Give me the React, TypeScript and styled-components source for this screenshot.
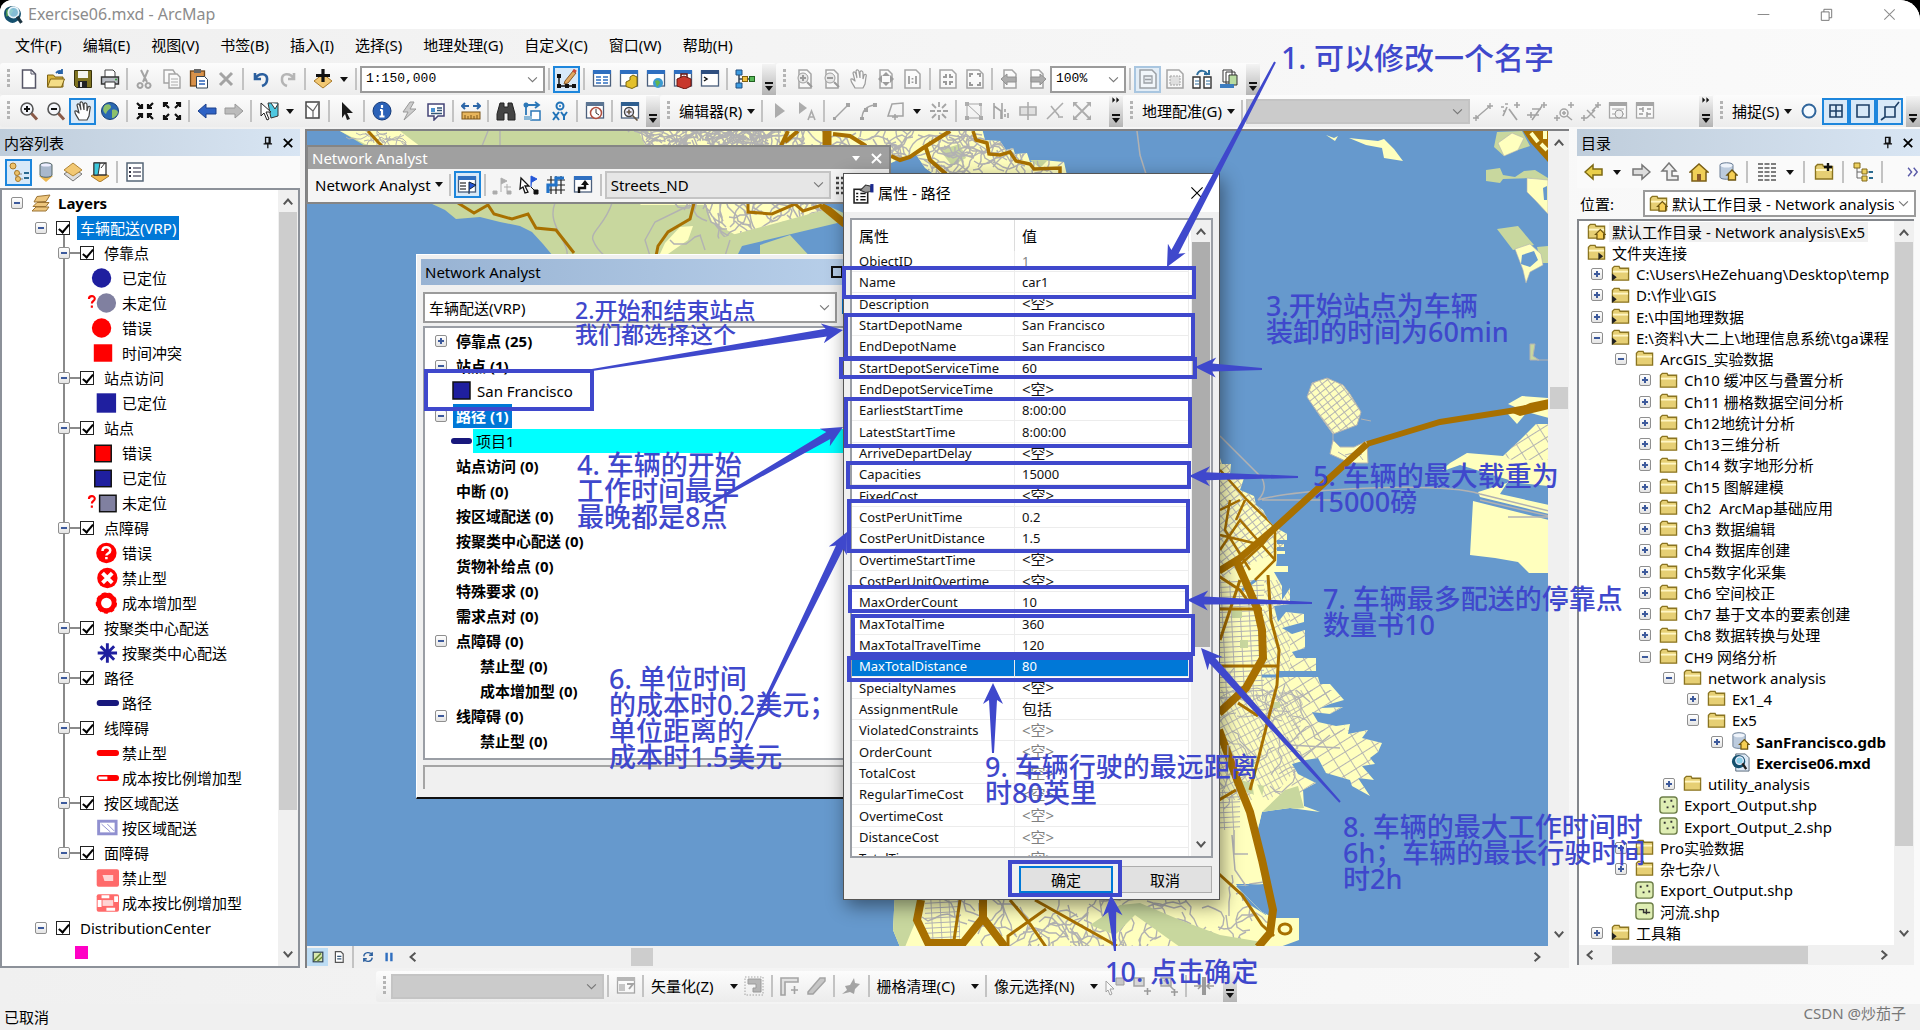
import React from "react";
import styled, { createGlobalStyle, css } from "styled-components";

const INK = "#3f48cc";
const SANS = `"Noto Sans", "Noto Sans CJK SC", sans-serif`;

const Global = createGlobalStyle`
  html, body, #root { height: 100%; }
  body { margin: 0; background: #000; overflow: hidden; }
  * { box-sizing: border-box; }
  button, input, select { font: inherit; color: inherit; margin: 0; padding: 0; }
  ul { list-style: none; margin: 0; padding: 0; }
`;

/* ---------- window frame ---------- */

const Root = styled.div`
  position: relative;
  display: flex;
  flex-direction: column;
  height: 100vh;
  overflow: hidden;
  border-radius: 12px 20px 0 0;
  background: linear-gradient(90deg, #f0f0f0, #fafafa);
  color: #000;
  font: 15px/20px ${SANS};
  white-space: nowrap;
`;
const TitleBar = styled.header`
  display: flex;
  align-items: center;
  gap: 5px;
  height: 29px;
  padding: 0 2px 1px;
  background: #fff;
  color: #8c8c8c;
  font-size: 16px;
`;
const TitleText = styled.span`flex: 1;`;
const WinButton = styled.button`
  display: flex;
  align-items: center;
  justify-content: center;
  width: 58px;
  height: 28px;
  border: 0;
  background: none;
`;
const MenuBar = styled.nav`
  display: flex;
  align-items: center;
  height: 34px;
  padding: 0 0 2px 5px;
`;
const MenuItem = styled.button`
  padding: 0 11px 0 10px;
  border: 0;
  background: none;
`;
const ToolRow = styled.div<{ $last?: boolean }>`
  display: flex;
  height: 32px;
  margin-bottom: ${p => (p.$last ? 2 : 0)}px;
`;
const ToolBar = styled.div<{ $w: number }>`
  display: flex;
  align-items: center;
  flex: 0 0 ${p => p.$w}px;
  padding-left: 4px;
  border-radius: 3px;
  background: linear-gradient(#fcfcfc, #ececec);
`;
const Grip = styled.span`
  flex: none;
  width: 3px;
  height: 20px;
  margin: 0 5px 0 3px;
  background: repeating-linear-gradient(#b4b4b4 0 3px, transparent 3px 5px);
`;
const Sep = styled.span`
  flex: none;
  width: 2px;
  height: 22px;
  margin: 0 3px;
  background: #c3c3c3;
`;
const Tool = styled.button<{ $on?: boolean; $pale?: boolean }>`
  display: flex;
  align-items: center;
  justify-content: center;
  flex: none;
  width: 27px;
  height: 27px;
  border: ${p => (p.$on ? "2px solid #1d86dc" : p.$pale ? "2px solid #a9c6e0" : "0")};
  background: ${p => (p.$on ? "#d8e9f8" : p.$pale ? "#e3edf6" : "none")};
`;
const Faint = styled.span`display: flex; filter: grayscale(1); opacity: 0.5;`;
const TextTool = styled.button<{ $gap?: number }>`
  display: flex;
  align-items: center;
  gap: ${p => p.$gap ?? 5}px;
  padding: 0 3px 0 4px;
  border: 0;
  background: none;
`;
const CaretShape = styled.span<{ $c?: string }>`
  flex: none;
  border: 4px solid transparent;
  border-top: 5px solid ${p => p.$c ?? "#111"};
  border-bottom: 0;
`;
const CaretBtn = styled.button`
  display: flex;
  align-items: center;
  justify-content: center;
  width: 16px;
  height: 26px;
  border: 0;
  background: none;
`;
const Overflow = styled.button`
  display: flex;
  flex-direction: column;
  align-items: center;
  justify-content: flex-end;
  gap: 2px;
  width: 14px;
  height: 31px;
  margin-left: auto;
  padding-bottom: 4px;
  border: 0;
  background: linear-gradient(#f4f4f4, #b4b4b4);
`;
const Dash = styled.span`width: 8px; height: 2px; background: #111;`;
const ComboBox = styled.span<{ $w?: number; $off?: boolean; $soft?: boolean; $h?: number }>`
  display: flex;
  align-items: center;
  gap: 4px;
  flex: ${p => (p.$w ? `0 0 ${p.$w}px` : "1")};
  min-width: 0;
  height: ${p => p.$h ?? 25}px;
  padding: 0 5px 0 4px;
  border: 2px solid ${p => (p.$off || p.$soft ? "#c4c4c4" : "#9b9b9b")};
  background: ${p => (p.$off ? "#cbcbcb" : p.$soft ? "#e6e6e6" : "#fff")};
`;
const Select = styled.select<{ $mono?: boolean }>`
  flex: 1;
  min-width: 0;
  border: 0;
  background: none;
  appearance: none;
  outline: 0;
  text-overflow: clip;
  ${p => p.$mono && css`font: 13px/18px "Liberation Mono", monospace;`}
`;

/* ---------- side panels ---------- */

const Main = styled.main`display: flex; flex: 1; min-height: 0;`;
const Side = styled.aside<{ $w: number }>`
  display: flex;
  flex-direction: column;
  flex: 0 0 ${p => p.$w}px;
  min-width: 0;
`;
const SideHead = styled.h2`
  display: flex;
  align-items: center;
  gap: 8px;
  height: 27px;
  margin: 0;
  padding: 0 6px 0 4px;
  background: linear-gradient(90deg, #bfcddb, #d8e5f3);
  font-size: 15px;
  font-weight: 400;
`;
const Grow = styled.span`flex: 1;`;
const Bare = styled.button`display: flex; border: 0; background: none;`;
const SideTools = styled.div<{ $pad: number; $gap?: number }>`
  display: flex;
  align-items: center;
  gap: ${p => p.$gap ?? 0}px;
  height: 32px;
  padding-left: ${p => p.$pad}px;
  background: #fafafa;
`;
const Well = styled.div`
  display: flex;
  flex: 1;
  min-height: 0;
  border: 2px solid #8c9199;
  background: #fff;
`;
const TocList = styled.ul`
  position: relative;
  flex: 1;
  min-width: 0;
  overflow: hidden;
`;
const TocRow = styled.li<{ $in: number; $bold?: boolean }>`
  display: flex;
  align-items: center;
  height: 25px;
  padding-left: ${p => p.$in}px;
  font-weight: ${p => (p.$bold ? 700 : 400)};
`;
const Spine = styled.span`
  position: absolute;
  left: 61px;
  top: 44px;
  width: 2px;
  height: 620px;
  background: #8a8a8a;
`;
const Stub = styled.span`width: 10px; height: 2px; background: #8a8a8a;`;
const Expander = styled.button<{ $plus?: boolean }>`
  position: relative;
  flex: none;
  width: 12px;
  height: 12px;
  border: 1px solid #8f8f8f;
  border-radius: 2px;
  background: linear-gradient(#fff, #e4e4e4);
  &::before, &::after {
    content: "";
    position: absolute;
    left: 2px;
    top: 4px;
    width: 6px;
    height: 2px;
    background: #3d5a9c;
  }
  &::after { left: 4px; top: 2px; width: 2px; height: 6px; display: ${p => (p.$plus ? "block" : "none")}; }
`;
const CheckSlot = styled.span<{ $lv: number }>`display: flex; margin-left: ${p => (p.$lv === 1 ? 9 : 0)}px;`;
const Check = styled.input`
  position: relative;
  flex: none;
  appearance: none;
  width: 14px;
  height: 14px;
  border: 1px solid #222;
  background: #fff;
  &:checked::after {
    content: "";
    position: absolute;
    left: 4px;
    top: 0;
    width: 4px;
    height: 9px;
    border: solid #000;
    border-width: 0 2px 2px 0;
    transform: rotate(40deg);
  }
`;
const Label = styled.label<{ $sel?: boolean; $ml?: number }>`
  padding: 2px 3px;
  margin-left: ${p => p.$ml ?? 0}px;
  background: ${p => (p.$sel ? "#0078d7" : "none")};
  color: ${p => (p.$sel ? "#fff" : "inherit")};
`;
const RootIcon = styled.span`display: flex; margin: 0 4px 0 8px;`;
const VBar = styled.div<{ $w?: number }>`
  display: flex;
  flex-direction: column;
  align-items: center;
  flex: 0 0 ${p => p.$w ?? 20}px;
  padding: 6px 0;
  background: #f0f0f0;
`;
const HBar = styled.div<{ $end?: number }>`
  display: flex;
  align-items: center;
  flex: 0 0 20px;
  min-width: 0;
  padding: 0 ${p => p.$end ?? 5}px 0 5px;
  background: #f0f0f0;
`;
const Thumb = styled.span<{ $v?: boolean; $at: number; $len: number; $c?: string }>`
  background: ${p => p.$c ?? "#cdcdcd"};
  ${p => p.$v
    ? css`width: 18px; height: ${p.$len}px; margin-top: ${p.$at}px;`
    : css`height: 18px; width: ${p.$len}px; margin-left: ${p.$at}px;`}
`;
const Push = styled.span`flex: 1;`;

/* ---------- map ---------- */

const MapPane = styled.section`
  display: flex;
  flex-direction: column;
  flex: 1;
  min-width: 0;
  margin: 0 8px 0 5px;
  border: solid #7f8083;
  border-width: 2px 0 0 2px;
`;
const MapTop = styled.div`display: flex; flex: 1; min-height: 0;`;
const MapSvg = styled.svg`
  flex: 1;
  min-width: 0;
  height: 100%;
  background: #6699cd;
`;
const MapFoot = styled.div`display: flex; align-items: center; height: 22px; background: #f0f0f0;`;
const FootScroll = styled.div`display: flex; align-items: center; flex: 1; min-width: 0; padding: 0 26px 0 8px;`;
const ViewBtn = styled.button<{ $on?: boolean }>`
  display: flex;
  align-items: center;
  justify-content: center;
  width: 21px;
  height: 18px;
  border: 0;
  background: ${p => (p.$on ? "#bcdcf4" : "none")};
`;

/* ---------- catalog ---------- */

const LocRow = styled.div`
  display: flex;
  align-items: center;
  gap: 29px;
  height: 31px;
  padding: 0 4px 0 3px;
`;
const CatWell = styled.div`
  display: flex;
  flex-direction: column;
  flex: 1;
  min-height: 0;
  margin: 0 6px 3px 0;
  border: solid #84878c;
  border-width: 2px 0 0 2px;
  background: #fff;
`;
const CatTop = styled.div`display: flex; flex: 1; min-height: 0;`;
const CatList = styled.ul`flex: 1; min-width: 0; overflow: hidden;`;
const CatRow = styled.li<{ $in: number; $bold?: boolean }>`
  display: flex;
  align-items: center;
  height: 21px;
  padding-left: ${p => p.$in}px;
  font-weight: ${p => (p.$bold ? 700 : 400)};
  &:nth-child(4n) { height: 22px; }
`;
const Blank = styled.span`flex: 0 0 12px;`;
const CatSlot = styled.span`display: flex; flex: 0 0 20px; margin-left: 8px;`;
const CatName = styled.span<{ $hot?: boolean }>`
  margin-left: 2px;
  padding: 0 3px;
  background: ${p => (p.$hot ? "#f0f0f0" : "none")};
  white-space: pre;
`;

/* ---------- floating windows ---------- */

const NaBar = styled.section`
  position: absolute;
  left: 306px;
  top: 145px;
  width: 585px;
  border: 2px solid #858585;
  background: #f5f5f5;
`;
const NaBarTitle = styled.h2`
  display: flex;
  align-items: center;
  gap: 10px;
  height: 22px;
  margin: 0;
  padding: 0 6px 0 4px;
  background: #a0a0a0;
  color: #fff;
  font-size: 15px;
  font-weight: 400;
`;
const NaBarRow = styled.div`display: flex; align-items: center; height: 33px; padding: 0 0 2px 3px;`;

const NaWin = styled.section`
  position: absolute;
  left: 416px;
  top: 254px;
  width: 470px;
  height: 545px;
  display: flex;
  flex-direction: column;
  padding: 4px;
  border: 1px solid #fff;
  border-bottom: 2px solid #111;
  background: #f0f0f0;
`;
const NaTitle = styled.h2`
  display: flex;
  align-items: center;
  height: 26px;
  margin: 0;
  padding: 0 38px 0 4px;
  background: linear-gradient(90deg, #98b3d3, #bad1eb);
  font-size: 15px;
  font-weight: 400;
`;
const MaxBox = styled.button`width: 12px; height: 12px; border: 2px solid #111; background: none;`;
const NaPick = styled.div`display: flex; gap: 5px; padding: 7px 22px 3px 2px;`;
const BlueBtn = styled.button`width: 22px; height: 22px; border: 2px solid #0078d7; background: #1180d9;`;
const NaWell = styled.div`
  flex: 1;
  min-height: 0;
  margin: 0 0 5px 2px;
  overflow: hidden;
  border: 2px solid #9a9ea5;
  background: #fff;
`;
const NaRow = styled.li<{ $in: number; $plain?: boolean }>`
  display: flex;
  align-items: center;
  height: 25px;
  padding-left: ${p => p.$in}px;
  font-weight: ${p => (p.$plain ? 400 : 700)};
`;
const Nudge = styled.span`flex: 0 0 6px;`;
const NaName = styled.span<{ $sel?: boolean; $cyan?: boolean }>`
  padding: 2px 3px;
  ${p => p.$sel && css`background: #0078d7; color: #fff;`}
  ${p => p.$cyan && css`flex: 1; background: #00ffff;`}
`;
const NaStatus = styled.div`
  height: 24px;
  margin: 0 0 4px 2px;
  border: solid #a5a5a5;
  border-width: 2px 0 0 2px;
`;

const Dialog = styled.section`
  position: absolute;
  left: 843px;
  top: 173px;
  width: 377px;
  height: 727px;
  display: flex;
  flex-direction: column;
  border: 1px solid #555;
  background: #f0f0f0;
  box-shadow: 3px 6px 18px rgba(0, 0, 0, 0.45);
`;
const DlgTitle = styled.h2`
  display: flex;
  align-items: center;
  gap: 4px;
  height: 38px;
  margin: 0;
  padding: 0 15px 0 9px;
  background: #fff;
  font-size: 15px;
  font-weight: 400;
`;
const DlgWell = styled.div`
  display: flex;
  height: 640px;
  margin: 6px 6px 0;
  border: 2px solid #9a9ea5;
  background: #fff;
`;
const GridClip = styled.div`flex: 1; min-width: 0; height: 636px; overflow: hidden;`;
const Grid = styled.table`
  width: 337px;
  border-spacing: 0;
  table-layout: fixed;
  font-size: 13px;
  line-height: 18px;
  th {
    height: 31px;
    padding: 0 0 0 7px;
    font-size: 15px;
    font-weight: 400;
    text-align: left;
    border-right: 1px solid #dcdcdc;
  }
  th:first-child { width: 163px; }
`;
const PropRow = styled.tr<{ $sel?: boolean; $dim?: boolean }>`
  height: 21px;
  &:nth-child(3n) { height: 22px; }
  td {
    padding: 0 0 0 7px;
    overflow: hidden;
    border-bottom: 1px solid #ececec;
    border-right: 1px solid #ececec;
    background: ${p => (p.$sel ? "#0078d7" : "none")};
    color: ${p => (p.$sel ? "#fff" : "#111")};
  }
  td + td { color: ${p => (p.$sel ? "#fff" : p.$dim ? "#808080" : "#111")}; }
`;
const Han = styled.span`font-size: 15px;`;
const DlgFoot = styled.div`display: flex; justify-content: flex-end; gap: 5px; padding: 8px 7px 0;`;
const DlgBtn = styled.button<{ $main?: boolean }>`
  width: 94px;
  height: 27px;
  border: ${p => (p.$main ? "2px solid #0078d7" : "1px solid #adadad")};
  background: #e1e1e1;
`;

/* ---------- bottom ---------- */

const Bottom = styled.div`display: flex; align-items: center; height: 36px; padding-left: 376px;`;
const Status = styled.footer`
  display: flex;
  align-items: center;
  height: 26px;
  padding: 0 14px 0 4px;
  background: #f0f0f0;
`;
const Mark = styled.span`margin-left: auto; padding-bottom: 8px; color: #777;`;

/* ---------- notes over the window ---------- */

const NoteLayer = styled.div`position: absolute; inset: 0; pointer-events: none; color: ${INK};`;
const NoteSvg = styled.svg`position: absolute; left: 0; top: 0; width: 1920px; height: 1030px;`;
const Note = styled.p<{ $x: number; $y: number; $s?: number }>`
  position: absolute;
  left: ${p => p.$x}px;
  top: ${p => p.$y}px;
  margin: 0;
  font-size: ${p => p.$s ?? 27}px;
  font-weight: 500;
  line-height: ${p => (p.$s === 23 ? 24 : 26)}px;
  white-space: pre;
`;

/* ---------- icons ---------- */

const doc = <path d="M4 1h8l4 4v14H4z" fill="#fff" stroke="#556" strokeWidth="1.5" />;
const win = (c: string) => <><rect x="1.5" y="2" width="17" height="15" fill="#fff" stroke="#4b5f7c" strokeWidth="1.3" /><rect x="1" y="1" width="18" height="4" fill={c} /></>;
const lens = (sign: string) => <><circle cx="8" cy="8" r="6" fill="#f4f6fa" stroke="#555" strokeWidth="1.6" /><path d="M12.5 12.5l5.5 6" stroke="#8a5a48" strokeWidth="3" /><path d={sign} stroke="#111" strokeWidth="2" /></>;
const folder = <><path d="M1.5 17V4.5l2-2h5l1 2h9V17z" fill="#e6cf74" stroke="#8a7420" strokeWidth="1.4" /><path d="M2 8h16" stroke="#fff6c4" strokeWidth="2" /></>;
const home = <path d="M9 13l5-5 5 5h-1.5v5h-7v-5z" fill="#f6cf54" stroke="#6d5510" strokeWidth="1.3" />;

const ICONS: Record<string, React.ReactNode> = {
  arcmap: <><path d="M2 9c0-9 15-9 16 0 0 4-2 8-8 9-6-1-8-5-8-9z" fill="#14506e" /><path d="M4 6c3-3 5-1 7 0l-3 5-4 1z" fill="#4d9a4e" /><circle cx="11" cy="8" r="5" fill="#9fd8ef" fillOpacity=".8" stroke="#e6f2f8" strokeWidth="1.6" /><path d="M14.5 12l4 6" stroke="#1c3440" strokeWidth="3" /></>,
  new: <><path d="M3.500 1h9l4 4v14h-13z" fill="#fff" stroke="#556" strokeWidth="1.5" /><path d="M12 1v4h4" stroke="#556" /></>,
  open: <><path d="M1.5 18V6h6l1.5 2h8v10z" fill="#d9b540" stroke="#7f6312" /><path d="M1.5 18l3-8h14l-3 8z" fill="#f4dd86" stroke="#7f6312" /><path d="M10 4c3-3 5-2 6-1M16 0v4h-4" stroke="#2662a8" strokeWidth="1.8" fill="none" /></>,
  save: <><path d="M1.5 1.5h17v17h-15l-2-2z" fill="#7f7320" stroke="#37320c" /><rect x="5" y="2" width="10" height="7" fill="#f4f4ee" /><rect x="5" y="12" width="9" height="7" fill="#222" /><rect x="7" y="13" width="2" height="5" fill="#ddd" /></>,
  print: <><path d="M5 8V1h8l2 2v5" fill="#fff" stroke="#444" /><path d="M1.5 8h17v7h-17z" fill="#b9bdc4" stroke="#333" strokeWidth="1.4" /><path d="M5 13h10v6H5z" fill="#fff" stroke="#333" /><circle cx="16" cy="10.5" r="1" fill="#2a9a32" /></>,
  cut: <path d="M6 1l6 12M13 1L8 13M5 14a2.5 2.5 0 1 0 .1 0M13 14a2.5 2.5 0 1 0 .1 0" fill="none" stroke="#555" strokeWidth="2" />,
  copy: <><path d="M2 1h9l2 3v10H2z" fill="#fff" stroke="#555" strokeWidth="1.4" /><path d="M7 5h8l3 3v11H7z" fill="#fff" stroke="#555" strokeWidth="1.4" /><path d="M9 10h7M9 13h7M9 16h7" stroke="#666" /></>,
  paste: <><rect x="1.5" y="2" width="14" height="15" fill="#d9924a" stroke="#704618" strokeWidth="1.3" /><rect x="5" y="0" width="7" height="4" fill="#666" /><path d="M7.5 7.5h8l3 3V19h-11z" fill="#fff" stroke="#345" /><path d="M10 12h6M10 15h6" stroke="#2a62b8" strokeWidth="1.4" /></>,
  del: <path d="M4 4l12 12M16 4L4 16" stroke="#555" strokeWidth="3" />,
  undo: <path d="M4 4v6h6M4 10C8 3 17 4 16 11c0 3-2 5-5 6" fill="none" stroke="#2b5f9e" strokeWidth="2.600" />,
  redo: <path d="M16 4v6h-6M16 10C12 3 3 4 4 11c0 3 2 5 5 6" fill="none" stroke="#777" strokeWidth="2.600" />,
  add: <><path d="M10 5l9 7-9 7-9-7z" fill="#f2c873" stroke="#a87a2a" /><path d="M10 0v13M3 6.5h14" stroke="#111" strokeWidth="3.2" /></>,
  edit: <><path d="M2 7v10h16" fill="none" stroke="#111" strokeWidth="1.4" /><path d="M0 5h4v4H0zM0 15h4v4H0zM8 15h4v4H8zM15 15h4v4h-4z" fill="#111" /><path d="M8 12L16 2l3 2-8 10-4 1z" fill="#e0a860" stroke="#8a5a28" /><path d="M16 1l3 2" stroke="#cc4a3a" strokeWidth="3" /></>,
  table: <>{win("#2f6fc0")}<path d="M4 8h5M11 8h5M4 11h5M11 11h5M4 14h5M11 14h5" stroke="#2f6fc0" strokeWidth="1.7" /></>,
  catalog: <>{win("#2f6fc0")}<path d="M7 13l4-2V8l3-2 4 2v9l-5 2.500-6-2z" fill="#e3c02c" stroke="#7d660c" /></>,
  search: <>{win("#2f6fc0")}<circle cx="12" cy="14" r="5" fill="#3b9ad1" /><path d="M9 12c3-2 5 0 5 2l-3 4z" fill="#62b54f" /></>,
  toolbox: <>{win("#2f6fc0")}<path d="M4 10l7-3 7 3v7l-6 3-8-3z" fill="#c8382c" stroke="#6b1710" /><path d="M8 8V5h6v3" stroke="#6b1710" fill="none" strokeWidth="1.5" /></>,
  python: <>{win("#2f4f80")}<path d="M4 8l3 2-3 2" stroke="#111" fill="none" strokeWidth="1.5" /></>,
  model: <><path d="M4 4v12M4 10h12" stroke="#345" strokeWidth="1.5" /><path d="M1 1h6v5H1zM1 14h6v5H1z" fill="#3d9be0" stroke="#1f4f80" /><rect x="7.5" y="7.5" width="5" height="5" fill="#f0c040" stroke="#806010" /><rect x="14.5" y="7.5" width="5" height="5" fill="#58b858" stroke="#206020" /></>,
  zoomin: lens("M8 5v6M5 8h6"),
  zoomout: lens("M5 8h6"),
  hand: <path d="M6 19C4 15 1 12 2 10c2-1 3 2 4 2L4 4c1-2 2-1 3 1l1 4-1-7c1-2 3-1 3 1l1 6V3c1-2 3-1 3 1v6l1-4c1-1 3-1 2 2l-1 7-2 4z" fill="#fff" stroke="#444" strokeWidth="1.2" />,
  globe: <><circle cx="10" cy="10" r="8.5" fill="#2a67b2" stroke="#173f74" /><path d="M5 4c4-2 6 0 6 2S7 9 6 13c-3-2-4-5-1-9zM12 9c3-1 5 0 6 2-1 4-4 6-6 6z" fill="#8cc06a" /></>,
  fixin: <path d="M2 2l5 5M7 3v4H3M18 2l-5 5M13 3v4h4M2 18l5-5M7 17v-4H3M18 18l-5-5M13 17v-4h4" stroke="#111" strokeWidth="2.200" fill="none" />,
  fixout: <path d="M7 7L2 2M2 6V2h4M13 7l5-5M18 6V2h-4M7 13l-5 5M2 14v4h4M13 13l5 5M18 14v4h-4" stroke="#111" strokeWidth="2.200" fill="none" />,
  back: <path d="M1 10l8-7v4h10v6H9v4z" fill="#2e62c4" stroke="#1c418c" />,
  fwd: <path d="M19 10l-8-7v4H1v6h10v4z" fill="#bbb" stroke="#999" />,
  select: <><path d="M9 2h10v13l-7 2z" fill="#4fc8e0" stroke="#333" /><path d="M12 2l4 6 3-5" fill="#fff" stroke="#333" /><path d="M2 2l10 9H7l3 7-2 1-3-7-3 3z" fill="#fff" stroke="#222" /></>,
  clear: <><path d="M4 1h13v16H4z" fill="#fff" stroke="#444" strokeWidth="1.5" /><path d="M4 4l7 6 6-9M11 10v7" fill="none" stroke="#666" strokeWidth="1.2" /></>,
  pointer: <path d="M5 1l11 11h-6l3 6-3 1-2-6-3 4z" fill="#1a1a1a" />,
  info: <><circle cx="10" cy="10" r="9" fill="#2b62b8" stroke="#143a7a" /><path d="M10 4v3M10 8.5v7M7.5 15.5h5M8 9h2" stroke="#fff" strokeWidth="2.2" /></>,
  bolt: <path d="M11 1L4 11h5l-4 8L17 8h-6l4-7z" fill="#ccc" stroke="#999" />,
  popup: <><path d="M2 3h16v12h-6l-4 4v-4H2z" fill="#fff" stroke="#447" strokeWidth="1.5" /><path d="M5 7h4v4H5z" fill="#4a90d0" /><path d="M11 7h5M11 9.5h5M5 12.5h11" stroke="#357" strokeWidth="1.3" /></>,
  measure: <><rect x="1" y="11" width="18" height="7" fill="#e7b55c" stroke="#7a5518" /><path d="M4 14v4M7 15v3M10 14v4M13 15v3M16 14v4" stroke="#7a5518" /><path d="M1 5h7M12 5h7M4 2L1 5l3 3M16 2l3 3-3 3" stroke="#2c66a8" strokeWidth="2" fill="none" /></>,
  find: <path d="M4 2h4v4h4V2h4l3 11v6h-7v-7H8v7H1v-6z" fill="#444" stroke="#222" />,
  route: <><path d="M3 14V4h12M12 1l4 3-4 3" stroke="#2c78b8" fill="none" strokeWidth="1.8" /><circle cx="3" cy="4" r="2.5" fill="#2c78b8" /><rect x="8" y="10" width="9" height="9" fill="#fff" stroke="#2c78b8" strokeWidth="1.5" /><path d="M1 15h8v4H1z" fill="#8ab8d8" /></>,
  gotoxy: <><circle cx="10" cy="5" r="3.5" fill="none" stroke="#2273b8" strokeWidth="2" /><circle cx="10" cy="5" r="1" fill="#2273b8" /><path d="M3 11l6 8M9 11l-6 8M11 11l3 4 3-4M14 15v4" stroke="#2273b8" strokeWidth="2" fill="none" /></>,
  time: <>{win("#5c7593")}<circle cx="11" cy="12" r="5.5" fill="#fff" stroke="#b05040" strokeWidth="1.5" /><path d="M11 8v4l3 2" stroke="#333" fill="none" /></>,
  viewer: <>{win("#2f5f90")}<circle cx="9" cy="11" r="4.5" fill="#eef" stroke="#444" strokeWidth="1.4" /><path d="M6.5 11h5M9 8.5v5M12.5 14.5l5 5" stroke="#654" strokeWidth="1.6" /></>,
  tri: <path d="M5 2l10 8-10 7z" fill="#666" />,
  triA: <><path d="M2 1l8 6-8 6z" fill="#666" /><path d="M11 19l3.5-9 3.5 9M12 16h5" stroke="#666" fill="none" strokeWidth="1.6" /></>,
  seg: <><path d="M3 17L16 4" stroke="#555" strokeWidth="1.4" /><path d="M14 2h4v4h-4zM1 16h3v3H1z" fill="#555" /></>,
  arc: <><path d="M3 18c0-8 4-13 13-14" stroke="#555" strokeWidth="1.4" fill="none" /><path d="M14 2h4v4h-4zM5 7h4v4H5zM1 16h4v3H1z" fill="#555" /></>,
  poly: <><path d="M6 3l11-1v13H2z" stroke="#555" strokeWidth="1.5" fill="none" /><path d="M9 13v6M6 16h6" stroke="#555" strokeWidth="1.5" /></>,
  burst: <path d="M10 1v5M10 14v5M1 10h5M14 10h5M3 3l4 4M17 3l-4 4M3 17l4-4M17 17l-4-4M8 10h4" stroke="#555" strokeWidth="1.8" />,
  shape: <><path d="M3 3v14h14M3 3l14 13M17 4v12M3 3h12" stroke="#555" fill="none" /><path d="M1 1h4v4H1zM1 15h4v4H1zM15 15h4v4h-4zM15 2h3v3h-3z" fill="#666" /></>,
  shape2: <path d="M3 2v16M3 5l7 5v8M14 8v3M14 13v3M17 12v5M11 2v16" stroke="#555" strokeWidth="1.6" fill="none" />,
  cross: <path d="M10 1v18M2 6h16v8H2z" stroke="#666" strokeWidth="1.6" fill="#ccc" />,
  cutl: <path d="M2 18L18 2M6 5l8 10M13 16h5" stroke="#666" strokeWidth="1.6" />,
  spread: <><path d="M2 2l16 16M18 2L2 18" stroke="#666" strokeWidth="1.8" /><path d="M1 1h5L1 6zM19 1h-5l5 5zM1 19h5l-5-5zM19 19h-5l5-5z" fill="#666" /></>,
  pzoomin: <>{doc}<circle cx="8" cy="9" r="5" fill="#ddd" stroke="#444" /><path d="M8 6v6M5 9h6M12 13l5 5" stroke="#444" strokeWidth="2" /></>,
  pzoomout: <>{doc}<circle cx="8" cy="9" r="5" fill="#ddd" stroke="#444" /><path d="M5 9h6M12 13l5 5" stroke="#444" strokeWidth="2" /></>,
  p4: <>{doc}<path d="M10 3l4 4H6zM10 17l4-4H6zM2 10l4-4v8zM18 10l-4-4v8z" fill="#444" /></>,
  p11: <><path d="M2 1h11l4 4v14H2z" fill="#fff" stroke="#556" strokeWidth="1.5" /><path d="M6 7v8M13 7v8M9.500 9v1.500M9.500 12.500v1.500" stroke="#444" strokeWidth="1.8" /></>,
  pin4: <><path d="M2 1h12l4 4v14H2z" fill="#fff" stroke="#556" strokeWidth="1.5" /><path d="M5 8h3V5M15 8h-3V5M5 13h3v3M15 13h-3v3" stroke="#444" strokeWidth="2" fill="none" /></>,
  pout4: <><path d="M2 1h12l4 4v14H2z" fill="#fff" stroke="#556" strokeWidth="1.5" /><path d="M5 8V5h3M15 8V5h-3M5 13v3h3M15 13v3h-3" stroke="#444" strokeWidth="2" fill="none" /></>,
  pleft: <>{doc}<path d="M1 10l6-5v3h9v5H7v3z" fill="#666" stroke="#333" /></>,
  pright: <>{doc}<path d="M19 10l-6-5v3H4v5h9v3z" fill="#666" stroke="#333" /></>,
  draft: <><path d="M2 1h12l4 4v14H2z" fill="#fff" stroke="#556" strokeWidth="1.5" /><path d="M6 7h8v7H6zM7 10.500h6" fill="#eee" stroke="#555" strokeWidth="1.3" /></>,
  focus: <><path d="M2 1h12l4 4v14H2z" fill="#fff" stroke="#556" strokeWidth="1.5" /><path d="M5 7h10v9H5z" fill="#ccc" stroke="#555" strokeDasharray="2 1" /></>,
  swap: <><path d="M5 6c2-6 9-5 10 0M12 5h5V1" fill="none" stroke="#2f6f9e" strokeWidth="2" /><path d="M1 8h7v11H1zM12 8h7v11h-7z" fill="#fff" stroke="#333" strokeWidth="1.4" /><path d="M3 12h4M3 15h4M14 12h4M14 15h4" stroke="#2f6f9e" /></>,
  pages: <><path d="M4 1h9v12H4zM7 3h9v12H7z" fill="#fff" stroke="#333" /><path d="M10 6h8v10h-8z" fill="#b8dca0" stroke="#333" /><rect x="1" y="15" width="14" height="4" fill="#3c7cc0" /></>,
  link: <path d="M3 17L17 5M14 5h6M17 2v6M0 17h6M3 14v6" stroke="#555" strokeWidth="1.4" />,
  wand: <path d="M9 8l8 11M14 4h6M17 1v6M1 6h3M5 3h3M3 10h3M7 6l-4 9" stroke="#555" strokeWidth="1.7" />,
  linkadd: <path d="M5 8h9M0 14h12M5 19L15 5M14 4h6M17 1v6M4 11v6" stroke="#555" strokeWidth="1.6" />,
  linkzoom: <><circle cx="10" cy="12" r="4" fill="none" stroke="#555" strokeWidth="1.5" /><path d="M8 12h4M10 10v4M13 15l5 4M14 4h6M17 1v6M0 17h6M3 14v6" stroke="#555" strokeWidth="1.5" /></>,
  linkdel: <path d="M6 9l8 8M14 9l-8 8M14 4h6M17 1v6M0 17h6M3 14v6M11 10L17 4" stroke="#555" strokeWidth="1.5" />,
  tblv: <>{win("#555")}<path d="M4 8h12M4 13h12" stroke="#555" /><circle cx="11" cy="13" r="4" fill="#eee" stroke="#444" /></>,
  tblh: <>{win("#555")}<path d="M4 8h4M12 8h4M4 13h4M12 13h4M8 6v5M12 11v5" stroke="#444" strokeWidth="1.4" /></>,
  ring: <circle cx="10" cy="10" r="6.5" fill="#f4faff" stroke="#31669c" strokeWidth="2" />,
  snapgrid: <path d="M4 4h12v12H4zM10 4v12M4 10h12" fill="none" stroke="#1d3f66" strokeWidth="1.6" />,
  snapbox: <path d="M4 4h12v12H4z" fill="none" stroke="#1d3f66" strokeWidth="1.6" />,
  snapedge: <path d="M5 6h10v10H5zM1 19l4-3M15 6l4-5" fill="none" stroke="#1d3f66" strokeWidth="1.6" />,
  tocorder: <><path d="M7 8v9h7M7 12h6" stroke="#888" fill="none" /><circle cx="4" cy="4" r="3" fill="#edc26a" stroke="#a87a2a" /><circle cx="8" cy="11" r="2.5" fill="#edc26a" stroke="#a87a2a" /><circle cx="9" cy="17" r="2.5" fill="#edc26a" stroke="#a87a2a" /><path d="M15 11h5M15 16h5" stroke="#2a6a90" strokeWidth="2" /></>,
  tocsrc: <><path d="M10 20l7-6H3z" fill="#edb850" /><path d="M4 3c0-3 12-3 12 0v10c0 3-12 3-12 0z" fill="#a9b8cc" stroke="#566" /><ellipse cx="10" cy="3" rx="5" ry="1.5" fill="#eef" /></>,
  tocvis: <><path d="M10 6l9 6-9 7-9-7z" fill="#ddd" stroke="#777" /><path d="M10 1l9 7-9 6-9-6z" fill="#f2c873" stroke="#b08535" /></>,
  tocsel: <><path d="M10 9l9 5-9 6-9-6z" fill="#f2b94e" stroke="#a87a2a" /><path d="M4 1h12v12H4z" fill="#fff" stroke="#333" strokeWidth="1.3" /><path d="M4 1h6l-2 12H4zM11 6l4-5" fill="#3dc8dc" stroke="#333" /></>,
  tocopt: <><rect x="2" y="1" width="16" height="18" fill="#fff" stroke="#567" strokeWidth="1.5" /><path d="M8 6h8M8 10h8M8 14h8" stroke="#667" strokeWidth="1.5" /><path d="M4 5h2v2H4zM4 9h2v2H4zM4 13h2v2H4z" fill="#334" /></>,
  layers: <path d="M1 18l4-4h13l-3 4zM2 13.500l4-4h12l-3 4zM3 9l3-5.500L19 2l-4 6.500z" fill="#edc67e" stroke="#9c7434" />,
  nawin: <>{win("#2f6fc0")}<path d="M3 8h6M3 11h6M3 14h6" stroke="#555" strokeWidth="1.4" /><path d="M12 19V7l7 3-6 4" fill="#2456d8" stroke="#123" /></>,
  naadd: <path d="M1 16h4v3H1zM15 16h4v3h-4zM9 17V3l6 3-6 3M15 9v7M12 12h7" fill="#666" stroke="#666" />,
  nasel: <><path d="M2 3l8 8H6l3 6-3 1-2-6-3 2z" fill="#fff" stroke="#111" strokeWidth="1.3" /><path d="M12 12V1l6 3-5 3" fill="#2456d8" stroke="#2456d8" /><path d="M12 12l5 5M15 15h4v4h-4z" fill="#111" stroke="#111" /></>,
  nagrid: <><path d="M5 1v18M10 1v18M15 1v18M1 5h18M1 10h18M1 15h18" stroke="#222" strokeWidth="1.2" /><path d="M2 18v-8h8V3h8" fill="none" stroke="#2273c8" strokeWidth="3.2" /></>,
  nadir: <>{win("#2f6fc0")}<path d="M6 18v-5h6V9" stroke="#111" strokeWidth="2.4" /><path d="M8 10l4-5 4 5z" fill="#111" /></>,
  namatrix: <path d="M2 3h18M2 8h18M2 13h18M2 18h18" stroke="#444" strokeWidth="2.400" strokeDasharray="3 2" />,
  prop: <><rect x="1" y="6" width="13" height="13" fill="#fff" stroke="#222" strokeWidth="1.5" /><path d="M3 10h2M7 10h5M3 13h2M7 13h5M3 16h2M7 16h5" stroke="#111" strokeWidth="1.3" /><path d="M7 7l5-5 5 1v5l-5 1z" fill="#999" stroke="#333" /><path d="M18 1v8" stroke="#1a2a90" strokeWidth="3" /></>,
  goback: <path d="M1 10l8-7v4h9v6H9v4z" fill="#e9cf4c" stroke="#7d6a14" strokeWidth="1.5" />,
  gofwd: <path d="M19 10l-8-7v4H2v6h9v4z" fill="#ddd" stroke="#777" strokeWidth="1.5" />,
  goup: <path d="M9 1l7 8h-4v5h6v4H7V9H2z" fill="#eee" stroke="#777" strokeWidth="1.5" />,
  house: <><path d="M1 10l9-8 9 8h-2v9H3v-9z" fill="#f0cf58" stroke="#7a5e14" strokeWidth="1.5" /><path d="M8 12h4v7H8z" fill="#8a5a2a" /></>,
  dbhome: <><path d="M2 3c0-3 13-3 13 0v12c0 3-13 3-13 0z" fill="#bccbdd" stroke="#6d7f96" /><ellipse cx="8.5" cy="3.5" rx="6" ry="2" fill="#eef3fa" />{home}</>,
  list: <path d="M1 2h18M1 6h18M1 10h18M1 14h18M1 18h18" stroke="#555" strokeWidth="1.6" strokeDasharray="5 1.5" />,
  connect: <>{folder}<path d="M14 1v8M10 5h8" stroke="#111" strokeWidth="2.4" /></>,
  tree: <><path d="M4 5v11h5M4 10h5M12 10h6" stroke="#666" fill="none" /><path d="M1 1h6v5H1zM9 7h5v5H9zM9 14h5v5H9z" fill="#ecd060" stroke="#80681a" /><path d="M16 10h4M16 16h4" stroke="#2a6a90" strokeWidth="2" /></>,
  folder,
  flink: <>{folder}<path d="M1 10l5 4-5 4z" fill="#222" /></>,
  froot: <>{folder}<path d="M12 10l5 4-5 4z" fill="#222" /></>,
  fhome: <>{folder}{home}</>,
  mxd: <><path d="M5 1h10l4 4v14H5z" fill="#dfeaf6" stroke="#567" /><circle cx="8" cy="9" r="7" fill="#14506e" /><circle cx="9" cy="8" r="4" fill="#8cd0e8" stroke="#eef" strokeWidth="1.3" /><path d="M12 11l4 6" stroke="#222" strokeWidth="2.5" /></>,
  shpp: <><rect x="1" y="1" width="18" height="17" rx="3" fill="#dfeeb4" stroke="#6e7f4a" strokeWidth="1.5" /><path d="M5 5h2v2H5zM12 4h2v2h-2zM8 11h2v2H8zM14 10h2v2h-2z" fill="#333" /></>,
  shpl: <><rect x="1" y="1" width="18" height="17" rx="3" fill="#dfeeb4" stroke="#6e7f4a" strokeWidth="1.5" /><path d="M4 8h5v3h7M12 7v6" stroke="#333" strokeWidth="1.5" fill="none" /></>,
  rsel: <>{win("#777")}<path d="M3 8h6v7H3z" fill="#999" /><path d="M11 8h6l-4 5" stroke="#555" strokeWidth="2" fill="none" /></>,
  rsnap: <><path d="M1 1h18v18H1z" stroke="#555" strokeDasharray="1.500 1.500" /><path d="M4 3h13v13H9v-4h3V8H4z" fill="#777" stroke="#444" /></>,
  rline: <path d="M2 19V2h17v4H6v13zM12 14h7M15.5 10v8" fill="#ccc" stroke="#555" strokeWidth="1.6" />,
  rerase: <path d="M2 16L14 2h5v3L7 18H2z" fill="#999" stroke="#555" strokeWidth="1.5" />,
  rplug: <path d="M1 18l5-4-2-4 5-1 4-7 1 5 5 1-5 5-1 5-4-2z" fill="#555" />,
  rarrow: <><path d="M1 5l8 8H5l2 5-2 1-2-5-2 2z" fill="#fff" stroke="#555" /><path d="M11 2h8v7h-8z" fill="#999" stroke="#444" /></>,
  rplus: <><path d="M2 2h10v8H2z" fill="#bbb" stroke="#555" strokeWidth="1.5" /><path d="M12 15h7M15.5 12v7" stroke="#444" strokeWidth="1.6" /></>,
  rslash: <><path d="M2 2h10v8H2zM5 4l10 10" fill="#bbb" stroke="#555" strokeWidth="1.5" /><path d="M12 16h7M15.5 13v7" stroke="#444" strokeWidth="1.6" /></>,
  rend: <><path d="M10 1v18" stroke="#444" strokeWidth="4" /><path d="M0 10h7M13 10h7M4 7l3 3-3 3M16 7l-3 3 3 3" stroke="#444" strokeWidth="1.600" fill="none" /></>,
  viewmap: <><rect x="2" y="2" width="16" height="16" fill="#d8e8b0" stroke="#345" strokeWidth="2" /><path d="M3 16L15 4M9 17l8-7" stroke="#6a8a3a" strokeWidth="2.5" /></>,
  viewpage: <><path d="M4 1h9l4 4v14H4z" fill="#fff" stroke="#555" strokeWidth="2" /><path d="M7 9h7M7 13h7" stroke="#357" strokeWidth="2" /></>,
  refresh: <path d="M3 9c1-8 11-8 14-2M17 2v5h-5M17 11c-1 8-11 8-14 2M3 18v-5h5" fill="none" stroke="#2b5f9e" strokeWidth="2.4" />,
  pause: <path d="M4 3h4v14H4zM12 3h4v14h-4z" fill="#2f6fc0" />,
  pin: <path d="M7 2h7v9H7zM4 12h13M10.5 12v7M12.5 2v9" fill="none" stroke="#111" strokeWidth="2" />,
  close: <path d="M3 3l14 14M17 3L3 17" stroke="currentColor" strokeWidth="3" />,
  thinx: <path d="M2 2l16 16M18 2L2 18" stroke="currentColor" strokeWidth="1.6" />,
  min: <path d="M1 10h18" stroke="#888" strokeWidth="1.5" />,
  restore: <path d="M2 6h12v13H2zM6 6V2h12v13h-4" fill="none" stroke="#777" strokeWidth="1.5" />,
  up: <path d="M3 14l7-8 7 8" fill="none" stroke="#555" strokeWidth="3.4" />,
  down: <path d="M3 6l7 8 7-8" fill="none" stroke="#555" strokeWidth="3.4" />,
  left: <path d="M14 3l-8 7 8 7" fill="none" stroke="#555" strokeWidth="3.4" />,
  right: <path d="M6 3l8 7-8 7" fill="none" stroke="#555" strokeWidth="3.4" />,
  chev: <path d="M2 6l8 8 8-8" fill="none" stroke="#777" strokeWidth="2" />,
  more: <path d="M3 4l5 6-5 6M11 4l5 6-5 6" fill="none" stroke="#5a5aa8" strokeWidth="2" />,
  hidden: <path d="M1 3l7 7-7 7zM11 3l7 7-7 7z" fill="#111" />,
};

const Icon = ({ n, s = 20 }: { n: string; s?: number }) => (
  <svg width={s} height={s} viewBox="0 0 20 20" fill="none" aria-hidden="true">{ICONS[n]}</svg>
);

/* tokens: "|" separator, "v" caret, "!x" disabled, "*x" pressed, "~x" pressed and disabled */
const Tools = ({ list }: { list: string }) => (
  <>
    {list.split(" ").map((t, i) => {
      if (t === "|") return <Sep key={i} />;
      if (t === "v") return <CaretBtn key={i} aria-label="more"><CaretShape /></CaretBtn>;
      const flag = "!*~".includes(t[0]) ? t[0] : "";
      const n = flag ? t.slice(1) : t;
      const faint = flag === "!" || flag === "~";
      return (
        <Tool key={i} $on={flag === "*"} $pale={flag === "~"} aria-label={n}>
          {faint ? <Faint><Icon n={n} /></Faint> : <Icon n={n} />}
        </Tool>
      );
    })}
  </>
);
const More = ({ full }: { full?: boolean }) => (
  <Overflow aria-label="toolbar options">
    {full && <Icon n="hidden" s={8} />}
    {full && <Push />}
    <Dash />
    <CaretShape />
  </Overflow>
);
type ComboProps = { label: string; value: string; w?: number; off?: boolean; soft?: boolean; mono?: boolean; h?: number; icon?: string };
const Combo = ({ label, value, w, off, soft, mono, h, icon }: ComboProps) => (
  <ComboBox $w={w} $off={off} $soft={soft} $h={h}>
    {icon && <Icon n={icon} s={19} />}
    <Select aria-label={label} $mono={mono}><option>{value}</option></Select>
    <Icon n="chev" s={11} />
  </ComboBox>
);

/* ---------- layer tree ---------- */

type Toc = [level: number, text: string, symbol?: string];
const TOC: Toc[] = [
  [1, "车辆配送(VRP)"],
  [2, "停靠点"], [3, "已定位", "dotBlue"], [3, "未定位", "qDot"], [3, "错误", "dotRed"], [3, "时间冲突", "sqRed"],
  [2, "站点访问"], [3, "已定位", "sqBlueR"],
  [2, "站点"], [3, "错误", "sqRedB"], [3, "已定位", "sqBlueB"], [3, "未定位", "qSq"],
  [2, "点障碍"], [3, "错误", "badQ"], [3, "禁止型", "badX"], [3, "成本增加型", "ringRed"],
  [2, "按聚类中心配送"], [3, "按聚类中心配送", "star"],
  [2, "路径"], [3, "路径", "lineBlue"],
  [2, "线障碍"], [3, "禁止型", "lineRed"], [3, "成本按比例增加型", "lineMix"],
  [2, "按区域配送"], [3, "按区域配送", "areaBlue"],
  [2, "面障碍"], [3, "禁止型", "areaRed"], [3, "成本按比例增加型", "areaMix"],
  [1, "DistributionCenter"],
];
const Q = <path d="M2 8c0-4 6-4 6-.5 0 2.5-3 2-3 5M5 14.5v2.5" stroke="red" strokeWidth="2.2" fill="none" />;
const SYMBOLS: Record<string, React.ReactNode> = {
  dotBlue: <circle cx="15" cy="12" r="10" fill="#1f1f9f" />,
  qDot: <>{Q}<circle cx="20" cy="12" r="10" fill="#8080a0" /></>,
  dotRed: <circle cx="15" cy="12" r="10" fill="red" />,
  sqRed: <rect x="7" y="3" width="19" height="18" fill="red" />,
  sqBlueR: <rect x="10" y="2" width="20" height="20" fill="#1f1f9f" />,
  sqRedB: <rect x="8" y="4" width="17" height="17" fill="red" stroke="#111" strokeWidth="1.5" />,
  sqBlueB: <rect x="8" y="4" width="17" height="17" fill="#1f1f9f" stroke="#111" strokeWidth="1.5" />,
  qSq: <>{Q}<rect x="13" y="4" width="17" height="17" fill="#8080a0" stroke="#111" strokeWidth="1.5" /></>,
  badQ: <><circle cx="20" cy="12" r="10.5" fill="red" /><path d="M16 10c0-5 8-5 8-.5 0 3-4 3-4 5M20 16v2.5" stroke="#fff" strokeWidth="2.6" fill="none" /></>,
  badX: <><circle cx="21" cy="12" r="10.5" fill="red" /><path d="M16 7l10 10M26 7L16 17" stroke="#fff" strokeWidth="4" /></>,
  ringRed: <><circle cx="20" cy="12" r="8" fill="#fff" stroke="red" strokeWidth="5" /><circle cx="20" cy="12" r="10" stroke="red" strokeWidth="2" strokeDasharray="4 3" /></>,
  star: <path d="M21 2v20M11 12h20M14 5l14 14M28 5L14 19" stroke="#1f1f9f" strokeWidth="3" />,
  lineBlue: <rect x="10" y="9" width="23" height="6" rx="3" fill="#18187c" />,
  lineRed: <rect x="10" y="9" width="23" height="6" rx="3" fill="red" />,
  lineMix: <><rect x="10" y="9" width="23" height="6" rx="3" fill="red" /><rect x="12" y="10.5" width="9" height="3" fill="#fff" /></>,
  areaBlue: <><rect x="12" y="5" width="18" height="13" fill="#fff" stroke="#9090d0" strokeWidth="3" /><path d="M15 8l9 8M21 8l7 7" stroke="#9090d0" /></>,
  areaRed: <><rect x="10" y="3" width="23" height="18" rx="2" fill="#ff6a6a" /><path d="M16 9h11v6H18z" fill="#ffd4d4" /></>,
  areaMix: <><rect x="10" y="3" width="23" height="18" rx="2" fill="#ff6a6a" /><path d="M15 4h8v3h-8zM28 5h4v6h-4zM11 9h4v7h-4zM20 17h9v3h-9z" fill="#fff" /><rect x="16" y="9" width="11" height="6" fill="#ffd4d4" /></>,
};

const LayerTree = () => (
  <TocList>
    <Spine />
    <TocRow $in={9} $bold><Expander aria-label="collapse" /><RootIcon><Icon n="layers" /></RootIcon><Label as="span">Layers</Label></TocRow>
    {TOC.map(([lv, text, sym], i) =>
      lv === 3 ? (
        <TocRow key={i} $in={85}>
          <svg width="32" height="24" viewBox="0 0 33 24" fill="none">{SYMBOLS[sym!]}</svg>
          <Label as="span">{text}</Label>
        </TocRow>
      ) : (
        <TocRow key={i} $in={lv === 1 ? 33 : 56}>
          <Expander aria-label="collapse" />
          {lv === 2 && <Stub />}
          <CheckSlot $lv={lv}><Check type="checkbox" defaultChecked id={`toc${i}`} /></CheckSlot>
          <Label htmlFor={`toc${i}`} $ml={7} $sel={i === 0}>{text}</Label>
        </TocRow>
      )
    )}
    <TocRow $in={73}><svg width="13" height="13"><rect width="13" height="13" fill="#ff00c5" /></svg></TocRow>
  </TocList>
);

/* ---------- catalog tree ---------- */

type Cat = [level: number, exp: "+" | "-" | "", icon: string, text: string, bold?: boolean];
const CATALOG: Cat[] = [
  [0, "", "fhome", "默认工作目录 - Network analysis\\Ex5"],
  [0, "", "froot", "文件夹连接"],
  [1, "+", "flink", "C:\\Users\\HeZehuang\\Desktop\\temp"],
  [1, "+", "flink", "D:\\作业\\GIS"],
  [1, "+", "flink", "E:\\中国地理数据"],
  [1, "-", "flink", "E:\\资料\\大二上\\地理信息系统\\tga课程"],
  [2, "-", "folder", "ArcGIS_实验数据"],
  [3, "+", "folder", "Ch10 缓冲区与叠置分析"],
  [3, "+", "folder", "Ch11 栅格数据空间分析"],
  [3, "+", "folder", "Ch12地统计分析"],
  [3, "+", "folder", "Ch13三维分析"],
  [3, "+", "folder", "Ch14 数字地形分析"],
  [3, "+", "folder", "Ch15 图解建模"],
  [3, "+", "folder", "Ch2  ArcMap基础应用"],
  [3, "+", "folder", "Ch3 数据编辑"],
  [3, "+", "folder", "Ch4 数据库创建"],
  [3, "+", "folder", "Ch5数字化采集"],
  [3, "+", "folder", "Ch6 空间校正"],
  [3, "+", "folder", "Ch7 基于文本的要素创建"],
  [3, "+", "folder", "Ch8 数据转换与处理"],
  [3, "-", "folder", "CH9 网络分析"],
  [4, "-", "folder", "network analysis"],
  [5, "+", "folder", "Ex1_4"],
  [5, "-", "folder", "Ex5"],
  [6, "+", "dbhome", "SanFrancisco.gdb", true],
  [6, "", "mxd", "Exercise06.mxd", true],
  [4, "+", "folder", "utility_analysis"],
  [3, "", "shpp", "Export_Output.shp"],
  [3, "", "shpp", "Export_Output_2.shp"],
  [2, "+", "folder", "Pro实验数据"],
  [2, "+", "folder", "杂七杂八"],
  [2, "", "shpp", "Export_Output.shp"],
  [2, "", "shpl", "河流.shp"],
  [1, "+", "flink", "工具箱"],
];

/* ---------- route properties ---------- */

const PROPS: [string, string, string?][] = [
  ["ObjectID", "1", "dim"], ["Name", "car1"], ["Description", "<空>"],
  ["StartDepotName", "San Francisco"], ["EndDepotName", "San Francisco"],
  ["StartDepotServiceTime", "60"], ["EndDepotServiceTime", "<空>"],
  ["EarliestStartTime", "8:00:00"], ["LatestStartTime", "8:00:00"],
  ["ArriveDepartDelay", "<空>"], ["Capacities", "15000"], ["FixedCost", "<空>"],
  ["CostPerUnitTime", "0.2"], ["CostPerUnitDistance", "1.5"],
  ["OvertimeStartTime", "<空>"], ["CostPerUnitOvertime", "<空>"],
  ["MaxOrderCount", "10"], ["MaxTotalTime", "360"], ["MaxTotalTravelTime", "120"],
  ["MaxTotalDistance", "80", "sel"], ["SpecialtyNames", "<空>"], ["AssignmentRule", "包括"],
  ["ViolatedConstraints", "<空>", "dim"], ["OrderCount", "<空>", "dim"], ["TotalCost", "<空>", "dim"],
  ["RegularTimeCost", "<空>", "dim"], ["OvertimeCost", "<空>", "dim"], ["DistanceCost", "<空>", "dim"],
  ["TotalTime", "<空>", "dim"],
];

const NA_ROWS: [number, string, string][] = [
  [10, "+", "停靠点 (25)"], [10, "-", "站点 (1)"], [27, "depot", "San Francisco"], [10, "-", "路径 (1)"],
  [26, "route", "项目1"], [28, "", "站点访问 (0)"], [28, "", "中断 (0)"], [28, "", "按区域配送 (0)"],
  [28, "", "按聚类中心配送 (0)"], [28, "", "货物补给点 (0)"], [28, "", "特殊要求 (0)"], [28, "", "需求点对 (0)"],
  [10, "-", "点障碍 (0)"], [52, "", "禁止型 (0)"], [52, "", "成本增加型 (0)"], [10, "-", "线障碍 (0)"],
  [52, "", "禁止型 (0)"], [52, "", "成本按比例增加型 (0)"],
];

/* ---------- map drawing ---------- */

const rng = (seed: number) => () => {
  seed = (seed * 1103515245 + 12345) & 0x7fffffff;
  return seed / 0x7fffffff;
};
/* short wandering lanes for the hilly suburbs */
const lanes = (seed: number, x: number, y: number, w: number, h: number, n: number, step = 6) => {
  const r = rng(seed);
  let d = "";
  for (let i = 0; i < n; i++) {
    let px = x + r() * w, py = y + r() * h, a = r() * 6.283;
    d += `M${px.toFixed(0)} ${py.toFixed(0)}`;
    for (let k = 0; k < 6; k++) {
      a += (r() - 0.5) * 1.8;
      px += Math.cos(a) * step;
      py += Math.sin(a) * step;
      d += `L${px.toFixed(0)} ${py.toFixed(0)}`;
    }
  }
  return d;
};
const CITY = "M1150 440L1212 458L1218 452L1222 464L1231 464L1230 474L1244 478L1240 490L1254 496L1256 505L1263 510L1268 520L1275 527L1287 534V540H1277V544H1284V547H1277V551H1285V554H1277V560L1276 566H1288V572H1274L1282 586V600L1290 588V604L1274 606L1278 622L1286 612L1304 614V622L1282 628L1292 634L1305 630V648L1292 652L1296 658H1316V671H1278V677H1318L1320 684L1330 684L1344 700L1330 704L1320 708L1343 707L1330 714L1312 712L1318 722L1336 726L1350 724L1348 734L1368 730L1362 738L1382 743L1378 752L1370 758L1375 764L1362 766L1374 780L1358 778L1370 796L1352 786L1350 780L1326 773L1318 758L1306 760L1292 764L1298 774L1316 783L1303 790L1304 806L1320 812L1290 808L1262 812L1257 833L1263 884L1236 886L1262 912L1274 918H1299V940L1280 947H900L893 930L895 890H1150Z";
const NORTHEAST = "M640 100H975L985 140L1000 141L1006 150L1013 148L1015 154L1027 153L1030 162L1042 160L1064 162L1068 180H942L925 168L915 153L891 163L850 203L640 260Z";
const TREASURE = "M1307 397L1312 383L1327 378L1343 385L1350 394L1361 412L1357 425L1333 434L1320 416Z";
const MapDrawing = () => (
  <MapSvg viewBox="307 131 1242 815" preserveAspectRatio="xMinYMin slice" fill="none" role="img" aria-label="San Francisco street map">
    <defs>
      <pattern id="gridA" width="9" height="5" patternUnits="userSpaceOnUse" patternTransform="rotate(-3)"><path d="M0 0H9M0 0V5" stroke="#b2b2b2" strokeWidth="1.8" /></pattern>
      <pattern id="gridB" width="7" height="6" patternUnits="userSpaceOnUse" patternTransform="rotate(-38)"><path d="M0 0H7M0 0V6" stroke="#b2b2b2" strokeWidth="1.8" /></pattern>
      <pattern id="gridC" width="9" height="5" patternUnits="userSpaceOnUse" patternTransform="rotate(62)"><path d="M0 0H9M0 0V5" stroke="#b2b2b2" strokeWidth="1.7" /></pattern>
      <pattern id="gridD" width="14" height="10" patternUnits="userSpaceOnUse" patternTransform="rotate(-32)"><path d="M0 0H14M0 0V10" stroke="#b2b2b2" strokeWidth="1.8" /></pattern>
      <clipPath id="city"><path d={CITY} /></clipPath>
      <clipPath id="ne"><path d={NORTHEAST} /></clipPath>
    </defs>

    <path d="M340 131L372 150L410 190L430 203L445 210L456 219L480 217L500 222L520 226L532 232L543 244L553 256H700L850 220V131Z" fill="#c8d79e" />
    <path d="M340 131H400L425 150H385L365 144Z" fill="#ffffbe" />
    <path d={lanes(9, 355, 131, 50, 12, 18, 4)} stroke="#b2b2b2" />
    <path d={NORTHEAST} fill="#ffffbe" />
    <path d="M640 131L700 131L690 150L640 205ZM640 205H706L712 222L745 240L735 260H640ZM760 245L790 235L815 262H760ZM940 150l20-6 6 14-14 8zM1030 160l18 0-8 8zM640 131h30l-10 18h-20z" fill="#c8d79e" />
    <path d="M665 243L680 227L693 226L688 240L668 254H660Z" fill="#ffffbe" />
    <path d="M640 134l12-3h50l60 0v16H646z" fill="#ffffbe" />
    <g clipPath="url(#ne)">
      <path d={lanes(3, 700, 131, 170, 125, 220)} stroke="#b2b2b2" strokeWidth="1.5" />
      <path d={lanes(4, 880, 131, 180, 40, 90)} stroke="#b2b2b2" strokeWidth="1.4" />
    </g>
    <path d={lanes(17, 645, 134, 130, 10, 90, 5)} stroke="#b2b2b2" strokeWidth="1.4" />
    <path d="M500 131V145M555 203C550 215 555 225 560 235S568 250 567 256M612 203C605 225 590 232 593 240S600 252 605 256M690 205L655 222L645 240L650 256M700 235L705 250M730 240L725 256M488 131L482 146" stroke="#b2b2b2" strokeWidth="1.4" />
    <path d="M368 131L378 142L386 150M458 203L474 213L488 205L494 214L512 219L528 214L536 228L556 230L574 253M694 203L690 219L668 232L658 246L656 256M748 203V212L772 214L795 204L803 211L822 205" stroke="#a87000" strokeWidth="3" />
    <path d="M822 205L845 224" stroke="#a87000" strokeWidth="8" />
    <path d="M822 203H850V216Z" fill="#6699cd" />
    <path d="M827 131V150" stroke="#a87000" strokeWidth="9" />
    <path d="M780 148L788 131M785 142L798 131M833 134L850 136L866 146M891 156L900 160L910 157L923 148L950 131M926 148L930 160L946 174" stroke="#a87000" strokeWidth="4" />
    <path d="M973 131L976 140L987 143L989 154L1000 155L1010 152L1016 161L1030 164L1034 169L1060 168L1060 174" stroke="#a87000" strokeWidth="3.5" />
    <path d="M1137 131L1140 155L1146 174" stroke="#b2b2b2" strokeWidth="1.5" />

    <path d="M1326 135l8 3 4-2-3 5zM1349 138L1378 141L1384 139L1394 149L1403 161L1384 158L1382 148L1366 145Z" fill="#ffffbe" />
    <path d="M1497 132L1522 131L1530 146L1518 150L1504 156L1494 147ZM1486 170L1500 168L1503 175L1515 177L1524 171L1535 170L1548 178V186L1530 178L1503 179L1500 183L1486 181ZM1497 229L1518 226L1534 245L1513 250ZM1537 247L1548 246V263H1541Z" fill="#c8d79e" />
    <path d="M1498 143L1512 133L1524 138L1518 150L1504 156ZM1527 178L1548 180V214L1535 200L1527 192ZM1515 249L1530 244L1541 254L1543 265L1530 272L1526 283L1523 270Z" fill="#ffffbe" stroke="#b2b2b2" strokeWidth=".6" />
    <path d="M1522 255L1534 251L1538 260L1530 267L1521 264ZM1543 188l4-2v14h-3z" fill="#6699cd" />
    <path d="M1523 131H1549V163L1530 142Z" fill="#a87000" />
    <path d="M1531 133L1538 142M1541 144L1547 150M1545 131v8" stroke="#ffffbe" strokeWidth="4" />
    <path d="M1530 344h5l-2 12 6 4h-9zM1537 360h12" fill="#c8d79e" stroke="#b2b2b2" />

    <path d={TREASURE} fill="#ffffbe" />
    <path d={TREASURE} fill="url(#gridB)" stroke="#b2b2b2" />
    <path d="M1333 440L1340 447L1354 447L1367 441L1368 463L1350 463L1330 454Z" fill="#ffffbe" stroke="#b2b2b2" />
    <path d="M1333 434V442M1345 455l12-3 6 8M1338 452l10 6 14-4M1361 419l10 2" stroke="#b2b2b2" />
    <path d="M1440 472L1450 463L1467 453L1503 456L1520 440L1536 424H1549V486L1510 482L1478 492L1480 497L1549 514V505L1500 494L1509 480L1460 465Z" fill="#ffffbe" />
    <path d="M1503 456L1536 424H1549V460H1512Z" fill="url(#gridD)" />
    <path d="M1473 501L1549 520V573H1529L1518 562L1495 558L1470 555Z" fill="#ffffbe" />
    <path d="M1508 404L1522 396L1549 398V418L1527 412L1517 424L1508 414L1522 410Z" fill="#ffffbe" />
    <path d="M1220 436L1262 478Q1268 490 1258 500M1258 500C1300 488 1440 482 1480 494L1549 511M1262 500H1340M1480 500L1549 516M1508 517H1549" stroke="#b2b2b2" strokeWidth="1.5" />

    <path d={CITY} fill="#ffffbe" />
    <g clipPath="url(#city)">
      <path d="M1150 440H1300V540L1219 580H1150Z" fill="url(#gridB)" />
      <path d="M1150 580H1264V700H1150Z" fill="url(#gridA)" />
      <path d="M1264 580H1290V680H1264Z" fill="url(#gridC)" />
      <path d="M1290 612H1330V700H1264V680H1290Z" fill="url(#gridD)" />
      <path d="M1216 690H1304L1296 770L1270 800H1216Z" fill="url(#gridC)" />
      <path d="M1298 730H1400V800H1290Z" fill="url(#gridD)" />
      <path d="M1270 690H1345V735H1298Z" fill="url(#gridD)" />
      <path d="M925 895H960V946H925ZM1216 790H1240V830H1216Z" fill="url(#gridA)" />
      <path d={lanes(31, 960, 900, 300, 46, 80, 7)} stroke="#b2b2b2" strokeWidth="1.4" />
      <path d={lanes(5, 1218, 690, 80, 110, 30, 7)} stroke="#b2b2b2" strokeWidth="1.2" />
      <path d="M893 880L925 900L912 930L905 947H885ZM1090 925L1120 905L1140 903L1180 920L1220 935L1262 942V947H1180L1135 915L1115 935ZM1240 780L1264 786L1262 798L1242 790ZM1285 790L1298 786L1304 808L1262 812ZM1232 610h10v8h-10zM1240 640h8v8h-8zM1272 702h8v6h-8z" fill="#c8d79e" />
      <path d="M1236 884L1264 884L1266 915L1250 905ZM1250 768L1264 800L1259 830Z" fill="#ffffbe" />
      <path d="M1236 884L1264 884L1266 915L1250 905Z" fill="#6699cd" />
      <path d="M1262 676h20M1242 590l14-10" stroke="#6699cd" strokeWidth="3" />
      <path d="M1220 470L1247 500L1275 527M1220 510L1240 500M1220 535L1262 545M1230 500L1225 530L1250 570M1220 550L1240 520L1275 560M1245 500L1236 520M1275 527V560L1255 580M1240 565L1262 545L1270 535" stroke="#a87000" strokeWidth="2.5" />
    </g>
    <path d="M1219 571L1240 558L1275 528L1367 444" stroke="#a87000" strokeWidth="7" />
    <path d="M1367 444L1400 434L1440 422L1510 411L1549 404" stroke="#a87000" strokeWidth="6" />
    <path d="M1510 412L1530 403L1549 399V409L1520 416Z" fill="#a87000" />
    <path d="M1217 575L1240 590L1250 604M1268 575L1271 620L1279 650L1277 685L1268 720L1258 760L1250 790M1220 666H1277M1220 609H1262M1238 703L1258 716M1220 640L1240 580" stroke="#a87000" strokeWidth="3" />
    <path d="M1236 560L1247 585L1257 608L1262 630L1263 658L1246 688L1219 713" stroke="#a87000" strokeWidth="8" />
    <path d="M1219 730L1230 760L1238 782L1250 812L1262 860L1273 910L1270 933L1258 947" stroke="#a87000" strokeWidth="8" />
    <path d="M1219 800L1236 790M1219 874L1242 895L1262 925L1274 936" stroke="#a87000" strokeWidth="3" />
    <ellipse cx="1285" cy="929" rx="6" ry="5" stroke="#a87000" strokeWidth="3" />
    <path d="M921 900L917 920L930 947M983 900V918L963 943H930M983 918L1005 947" stroke="#a87000" strokeWidth="8" />
    <path d="M960 900L953 947M1010 900L1030 924L1046 947M1035 900L1117 946M1046 909L1008 936V947" stroke="#a87000" strokeWidth="3" />
    <path d="M1228 745L1227 780M1234 830v24h14M1232 835L1235 870L1246 886M1296 690L1310 702M1290 745L1340 748M1300 760L1330 735" stroke="#b2b2b2" strokeWidth="1.5" />
  </MapSvg>
);

/* ---------- notes ---------- */

/* tapered stroke from a thin tail to a barbed head */
const arrow = (x1: number, y1: number, x2: number, y2: number) => {
  const len = Math.hypot(x2 - x1, y2 - y1);
  const ux = (x2 - x1) / len, uy = (y2 - y1) / len;
  const pt = (back: number, side: number) => `${(x2 - ux * back - uy * side).toFixed(1)},${(y2 - uy * back + ux * side).toFixed(1)}`;
  return [pt(0, 0), pt(21, 10), pt(17, 4), pt(len, 1), pt(len, -1), pt(17, -4), pt(21, -10)].join(" ");
};
const BOXES = [
  [844, 268, 350, 29], [846, 315, 347, 43], [841, 359, 354, 18], [846, 399, 344, 47], [848, 463, 341, 24],
  [849, 501, 339, 50], [850, 587, 337, 24], [853, 616, 340, 38], [849, 658, 342, 22], [1010, 862, 110, 33], [426, 371, 166, 38],
];
const ARROWS = [
  [1275, 62, 1167, 267], [592, 370, 843, 330], [1262, 369, 1195, 367], [706, 506, 843, 427], [1298, 477, 1189, 476],
  [746, 740, 847, 532], [1312, 603, 1187, 600], [1340, 802, 1201, 648], [993, 753, 993, 683], [1115, 951, 1111, 895],
];
const Notes = () => (
  <NoteLayer>
    <NoteSvg viewBox="0 0 1920 1030">
      {BOXES.map(([x, y, w, h], i) => <rect key={i} x={x} y={y} width={w} height={h} fill="none" stroke={INK} strokeWidth="4" />)}
      {ARROWS.map(([a, b, c, d], i) => <polygon key={i} points={arrow(a, b, c, d)} fill={INK} />)}
    </NoteSvg>
    <Note $x={1281} $y={45} $s={30}>1. 可以修改一个名字</Note>
    <Note $x={575} $y={298} $s={23}>{"2.开始和结束站点\n我们都选择这个"}</Note>
    <Note $x={1266} $y={293}>{"3.开始站点为车辆\n装卸的时间为60min"}</Note>
    <Note $x={577} $y={452}>{"4. 车辆的开始\n工作时间最早\n最晚都是8点"}</Note>
    <Note $x={1313} $y={463}>{"5. 车辆的最大载重为\n15000磅"}</Note>
    <Note $x={609} $y={666}>{"6. 单位时间\n的成本时0.2美元；\n单位距离的\n成本时1.5美元"}</Note>
    <Note $x={1323} $y={586}>{"7. 车辆最多配送的停靠点\n数量书10"}</Note>
    <Note $x={1343} $y={814}>{"8. 车辆的最大工作时间时\n6h；车辆的最长行驶时间\n时2h"}</Note>
    <Note $x={985} $y={754}>{"9. 车辆行驶的最远距离\n时80英里"}</Note>
    <Note $x={1105} $y={959}>10. 点击确定</Note>
  </NoteLayer>
);

const MENU = ["文件(F)", "编辑(E)", "视图(V)", "书签(B)", "插入(I)", "选择(S)", "地理处理(G)", "自定义(C)", "窗口(W)", "帮助(H)"];

export default function App() {
  return (
    <>
      <Global />
      <Root>
        <TitleBar>
          <Icon n="arcmap" s={21} />
          <TitleText>Exercise06.mxd - ArcMap</TitleText>
          <WinButton aria-label="minimize"><Icon n="min" s={13} /></WinButton>
          <WinButton aria-label="restore"><Icon n="restore" s={13} /></WinButton>
          <WinButton aria-label="close"><Icon n="thinx" s={13} /></WinButton>
        </TitleBar>
        <MenuBar>{MENU.map(m => <MenuItem key={m}>{m}</MenuItem>)}</MenuBar>
        <ToolRow>
          <ToolBar $w={776}>
            <Grip />
            <Tools list="new open save print | !cut !copy paste !del | undo !redo | add v |" />
            <Combo label="scale" value="1:150,000" w={185} h={27} mono />
            <Tools list="| *edit | table catalog search toolbox python | model" />
            <More />
          </ToolBar>
          <ToolBar $w={484}>
            <Grip />
            <Tools list="!pzoomin !pzoomout !hand !p4 !p11 | !pin4 !pout4 | !pleft !pright" />
            <Combo label="zoom" value="100%" w={76} h={27} mono />
            <Tools list="| ~draft !focus swap pages" />
            <More />
          </ToolBar>
        </ToolRow>
        <ToolRow $last>
          <ToolBar $w={660}>
            <Grip />
            <Tools list="zoomin zoomout *hand globe | fixin fixout | back fwd | select v clear | pointer | info bolt popup | measure | find route gotoxy | time | viewer" />
            <More />
          </ToolBar>
          <ToolBar $w={463}>
            <Grip />
            <TextTool>编辑器(R)<CaretShape /></TextTool>
            <Tools list="| !tri !triA | !seg !arc !poly v !burst | !shape !shape2 !cross !cutl !spread" />
            <More full />
          </ToolBar>
          <ToolBar $w={590}>
            <Grip />
            <TextTool>地理配准(G)<CaretShape /></TextTool>
            <Sep />
            <Combo label="raster layer" value="" w={224} off />
            <Tools list="!link !wand !linkadd !linkzoom !linkdel !tblv !tblh" />
            <More full />
          </ToolBar>
          <ToolBar $w={207}>
            <Grip />
            <TextTool>捕捉(S)<CaretShape /></TextTool>
            <Tools list="ring *snapgrid *snapbox *snapedge" />
            <More />
          </ToolBar>
        </ToolRow>

        <Main>
          <Side $w={300}>
            <SideHead>内容列表<Grow /><Bare aria-label="pin"><Icon n="pin" s={13} /></Bare><Bare aria-label="close"><Icon n="close" s={12} /></Bare></SideHead>
            <SideTools $pad={5}><Tools list="*tocorder tocsrc tocvis tocsel | tocopt" /></SideTools>
            <Well>
              <LayerTree />
              <VBar><Icon n="up" s={12} /><Thumb $v $at={4} $len={598} /><Push /><Icon n="down" s={12} /></VBar>
            </Well>
          </Side>

          <MapPane>
            <MapTop>
              <MapDrawing />
              <VBar $w={21}><Icon n="up" s={12} /><Thumb $v $at={238} $len={22} /><Push /><Icon n="down" s={12} /></VBar>
            </MapTop>
            <MapFoot>
              <ViewBtn $on aria-label="data view"><Icon n="viewmap" s={12} /></ViewBtn>
              <ViewBtn aria-label="layout view"><Icon n="viewpage" s={12} /></ViewBtn>
              <Sep />
              <ViewBtn aria-label="refresh"><Icon n="refresh" s={12} /></ViewBtn>
              <ViewBtn aria-label="pause"><Icon n="pause" s={12} /></ViewBtn>
              <FootScroll><Icon n="left" s={12} /><Thumb $at={212} $len={22} /><Push /><Icon n="right" s={12} /></FootScroll>
            </MapFoot>
          </MapPane>

          <Side $w={343}>
            <SideHead>目录<Grow /><Bare aria-label="pin"><Icon n="pin" s={13} /></Bare><Bare aria-label="close"><Icon n="close" s={12} /></Bare></SideHead>
            <SideTools $pad={3} $gap={2}>
              <Tools list="goback v gofwd goup house dbhome | list v | connect | tree |" />
              <Grow />
              <Bare aria-label="more"><Icon n="more" s={14} /></Bare>
            </SideTools>
            <LocRow>
              <span>位置:</span>
              <Combo label="location" value="默认工作目录 - Network analysis\E:" icon="fhome" h={27} />
            </LocRow>
            <CatWell>
              <CatTop>
                <CatList>
                  {CATALOG.map(([lv, exp, icon, text, bold], i) => (
                    <CatRow key={i} $in={lv === 0 ? 0 : lv * 24 - 12} $bold={bold}>
                      {lv > 0 && (exp ? <Expander $plus={exp === "+"} aria-label="toggle" /> : <Blank />)}
                      <CatSlot><Icon n={icon} s={19} /></CatSlot>
                      <CatName $hot={i === 0}>{text}</CatName>
                    </CatRow>
                  ))}
                </CatList>
                <VBar><Icon n="up" s={12} /><Thumb $v $at={3} $len={604} /><Push /><Icon n="down" s={12} /></VBar>
              </CatTop>
              <HBar $end={24}><Icon n="left" s={12} /><Thumb $at={16} $len={196} /><Push /><Icon n="right" s={12} /></HBar>
            </CatWell>
          </Side>
        </Main>

        <Bottom>
          <ToolBar $w={861}>
            <Grip />
            <Combo label="raster" value="" w={213} off />
            <Tools list="| !rsel |" />
            <TextTool $gap={16}>矢量化(Z)<CaretShape /></TextTool>
            <Tools list="!rsnap | !rline !rerase | !rplug |" />
            <TextTool $gap={16}>栅格清理(C)<CaretShape /></TextTool>
            <Sep />
            <TextTool $gap={16}>像元选择(N)<CaretShape /></TextTool>
            <Tools list="!rarrow !rplus !rslash | !rend" />
            <More />
          </ToolBar>
        </Bottom>
        <Status>已取消<Mark>CSDN @炒茄子</Mark></Status>

        <NaBar>
          <NaBarTitle>Network Analyst<Grow /><CaretShape $c="#fff" /><Bare aria-label="close"><Icon n="close" s={13} /></Bare></NaBarTitle>
          <NaBarRow>
            <TextTool $gap={4}>Network Analyst<CaretShape /></TextTool>
            <Tools list="| *nawin | !naadd nasel nagrid nadir |" />
            <Combo label="network dataset" value="Streets_ND" w={226} h={28} soft />
            <Tools list="namatrix" />
          </NaBarRow>
        </NaBar>

        <NaWin>
          <NaTitle>Network Analyst<Grow /><MaxBox aria-label="maximize" /></NaTitle>
          <NaPick><Combo label="analysis layer" value="车辆配送(VRP)" w={414} h={31} /><BlueBtn aria-label="properties" /></NaPick>
          <NaWell>
            <ul>
              {NA_ROWS.map(([x, mark, text], i) => (
                <NaRow key={i} $in={x} $plain={mark === "depot" || mark === "route"}>
                  {(mark === "+" || mark === "-") && <><Expander $plus={mark === "+"} aria-label="toggle" /><Nudge /></>}
                  {mark === "depot" && <svg width="22" height="20"><rect x="1" y="1" width="17" height="17" fill="#1f1f9f" stroke="#111" strokeWidth="1.5" /></svg>}
                  {mark === "route" && <svg width="22" height="20"><rect x="0" y="7" width="21" height="6" rx="3" fill="#18187c" /></svg>}
                  <NaName $sel={i === 3} $cyan={mark === "route"}>{text}</NaName>
                </NaRow>
              ))}
            </ul>
          </NaWell>
          <NaStatus />
        </NaWin>

        <Dialog role="dialog" aria-label="属性 - 路径">
          <DlgTitle><Icon n="prop" s={21} />属性 - 路径<Grow /><Bare aria-label="close"><Icon n="thinx" s={14} /></Bare></DlgTitle>
          <DlgWell>
            <GridClip>
              <Grid>
                <thead><tr><th>属性</th><th>值</th></tr></thead>
                <tbody>
                  {PROPS.map(([k, v, flag]) => (
                    <PropRow key={k} $sel={flag === "sel"} $dim={flag === "dim"}>
                      <td>{k}</td>
                      <td>{/[空包]/.test(v) ? <Han>{v}</Han> : v}</td>
                    </PropRow>
                  ))}
                </tbody>
              </Grid>
            </GridClip>
            <VBar $w={20}><Icon n="up" s={12} /><Thumb $v $at={4} $len={405} $c="#adadad" /><Push /><Icon n="down" s={12} /></VBar>
          </DlgWell>
          <DlgFoot><DlgBtn $main>确定</DlgBtn><DlgBtn>取消</DlgBtn></DlgFoot>
        </Dialog>

        <Notes />
      </Root>
    </>
  );
}
